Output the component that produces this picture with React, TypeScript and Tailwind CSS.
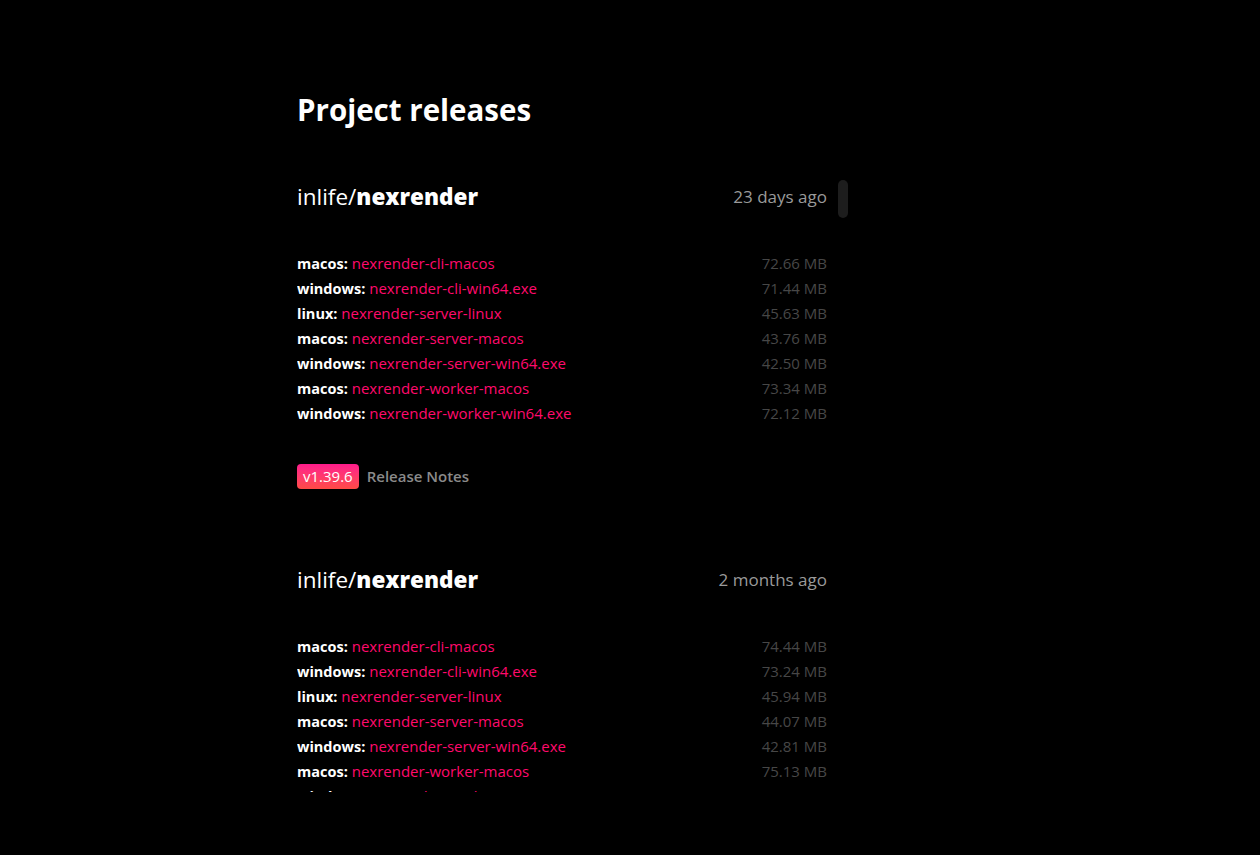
import React from "react"

type Asset = {
    os: string
    name: string
    size: string
}

type Release = {
    repo: string
    project: string
    when: string
    version: string
    assets: Asset[]
}

const names: [string, string][] = [
    ["macos", "nexrender-cli-macos"],
    ["windows", "nexrender-cli-win64.exe"],
    ["linux", "nexrender-server-linux"],
    ["macos", "nexrender-server-macos"],
    ["windows", "nexrender-server-win64.exe"],
    ["macos", "nexrender-worker-macos"],
    ["windows", "nexrender-worker-win64.exe"],
]

const first = ["72.66", "71.44", "45.63", "43.76", "42.50", "73.34", "72.12"]
const second = ["74.44", "73.24", "45.94", "44.07", "42.81", "75.13", "73.93"]

const whens = ["23 days ago", "2 months ago", "3 months ago", "4 months ago", "5 months ago", "7 months ago", "9 months ago"]

const releases: Release[] = Array.from({ length: 26 }, (_, i) => {
    const sizes =
        i === 0
            ? first
            : i === 1
            ? second
            : second.map((s, j) => (parseFloat(s) - i * 0.37 - j * 0.05).toFixed(2))
    return {
        repo: "inlife",
        project: "nexrender",
        when: i < whens.length ? whens[i] : "a year ago",
        version: `v1.${39 - Math.floor(i / 7)}.${6 - (i % 7)}`,
        assets: names.map(([os, name], j) => ({ os, name, size: `${sizes[j]} MB` })),
    }
})

function ReleaseBlock({ r }: { r: Release }) {
    return (
        <section className="pb-[74px]">
            <div className="flex items-center justify-between h-[34px]">
                <h2 className="text-[22.5px] text-white leading-[34px]">
                    {r.repo}/<span className="font-extrabold">{r.project}</span>
                </h2>
                <span className="text-[17px] text-[#9a9a9a]">{r.when}</span>
            </div>

            <ul className="mt-[37px]">
                {r.assets.map((a) => (
                    <li key={a.name} className="flex items-center justify-between h-[25px] text-[15px]">
                        <span>
                            <span className="font-bold text-white text-[14.5px]">{a.os}:</span>{" "}
                            <a href="#" className="text-[#ff0a6c]">{a.name}</a>
                        </span>
                        <span className="text-[#474747]">{a.size}</span>
                    </li>
                ))}
            </ul>

            <div className="mt-[38px] flex items-center gap-2 h-[25px]">
                <span className="h-[25px] px-[6px] rounded-[4px] bg-gradient-to-b from-[#ff1a8c] to-[#ff4a44] text-white text-[15px] leading-[25px]">
                    {r.version}
                </span>
                <a href="#" className="text-[15px] font-semibold text-[#8a8a8a]">Release Notes</a>
            </div>
        </section>
    )
}

export default function App() {
    return (
        <div className="min-h-screen bg-black font-['Open_Sans',sans-serif] pl-[297px]">
            <h1 className="pt-[90px] text-[29.5px] leading-[40px] font-bold text-white">Project releases</h1>

            <div className="mt-[50px] flex gap-[10px] h-[612px]">
                <div className="w-[530px] overflow-hidden">
                    {releases.map((r, i) => (
                        <ReleaseBlock key={i} r={r} />
                    ))}
                </div>
                {/* scrollbar track */}
                <div className="w-[11px] pl-[1px]">
                    <div className="h-[38px] w-[10px] rounded-full bg-[#1d1d1d]" />
                </div>
            </div>
        </div>
    )
}
